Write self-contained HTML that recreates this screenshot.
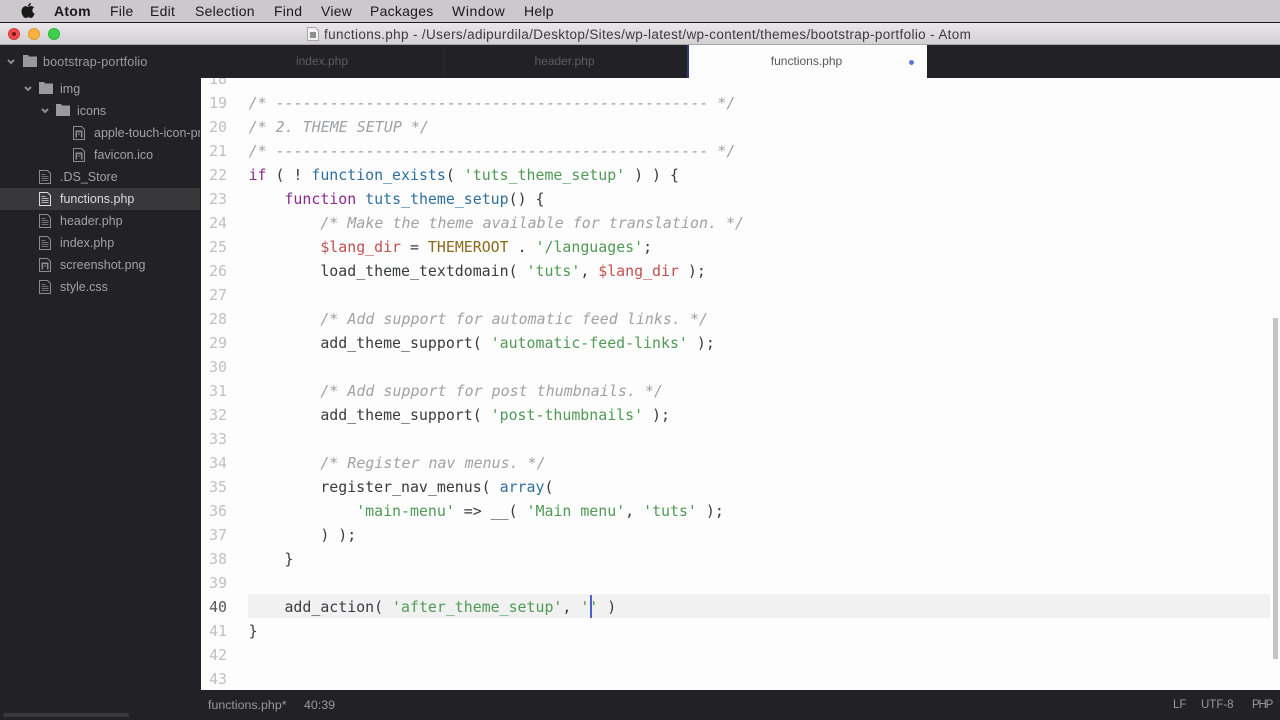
<!DOCTYPE html>
<html><head><meta charset="utf-8"><style>
*{box-sizing:border-box}
html,body{margin:0;padding:0;width:1280px;height:720px;overflow:hidden;background:#222125;font-family:"Liberation Sans",sans-serif}
.abs,.m,.t,.f,.ln,.cl,svg{position:absolute}
#menu{position:absolute;left:0;top:0;width:1280px;height:23px;background:#cbc9cc;border-bottom:1px solid #1c1c1c}
.m{top:3px;font-size:14px;line-height:17px;color:#1a1a1a;white-space:nowrap;letter-spacing:.25px}
#title{position:absolute;left:0;top:23px;width:1280px;height:22px;background:linear-gradient(#e9e7ea,#d2d0d3);border-bottom:1px solid #a9a8aa}
.dot{position:absolute;top:5px;width:12px;height:12px;border-radius:50%}
#tt{position:absolute;left:324px;top:4px;font-size:13.5px;line-height:16px;color:#3c3c3c;white-space:nowrap;letter-spacing:.35px}
#side{position:absolute;left:0;top:45px;width:201px;height:675px;background:#222125}
#tabs{position:absolute;left:201px;top:45px;width:1079px;height:33px;background:#222125}
.t{top:53px;font-size:12px;line-height:16px;text-align:center;color:#5d5c60}
#ed{position:absolute;left:201px;top:78px;width:1079px;height:612px;background:#fdfdfd;overflow:hidden}
#cur{position:absolute;left:47px;top:516px;width:1022px;height:24px;background:#f1f1f2}
.ln{left:0;width:26px;margin-top:1px;text-align:right;font:14.9px/24px "DejaVu Sans Mono",monospace;color:#c0c0c2}
.cl{left:47.6px;margin-top:1px;font:14.9px/24px "DejaVu Sans Mono",monospace;color:#3a3b40;white-space:pre}
.c{color:#a0a1a6;font-style:italic;letter-spacing:.05px}.k{color:#8a2a8c}.b{color:#2f6f9e}.s{color:#4f9a55}.v{color:#c0504d}.o{color:#8a6a1c}
.f{font-size:12.5px;line-height:16px;color:#a2a1a4;white-space:nowrap}
#sel{position:absolute;left:0;top:188px;width:200px;height:22px;background:#38373a}
#bar{position:absolute;left:201px;top:690px;width:1079px;height:30px;background:#222125}
.st{position:absolute;top:698px;font-size:12px;line-height:14px;color:#98979a;white-space:nowrap}
</style></head><body>
<svg width="0" height="0" style="left:0;top:0"><defs>
<symbol id="doc" viewBox="0 0 12 14"><path fill="none" stroke="currentColor" d="M.5.5h8l3 3v10H.5z"/><path fill="none" stroke="currentColor" stroke-width=".8" d="M2.500 4.500h4M2.500 6.500h7M2.500 8.500h7M2.500 10.500h7"/></symbol>
<symbol id="imgf" viewBox="0 0 12 14"><path fill="none" stroke="currentColor" d="M.5.5h8l3 3v10H.5z"/><path fill="none" stroke="currentColor" stroke-width="1.600" d="M3.300 11.500V5.300h5.400v6.200"/><rect x="5" y="7" width="2" height="2" fill="currentColor" opacity=".5"/></symbol>
</defs></svg>
<div id="menu"></div>
<svg style="left:20px;top:2px" width="16" height="18" viewBox="0 0 16 18"><path fill="#1a1a1a" d="M11 1c0 1.700-1.300 3.200-3 3.200C8 2.500 9.400 1.200 11 1zM8 4.800c.8 0 1.700-.8 3-.8 1.200 0 2.300.6 3 1.600-2.500 1.500-2.100 5 .6 6-.7 1.900-2 4.400-3.500 4.400-1 0-1.500-.7-2.700-.7s-1.700.7-2.700.7C3.700 16 1.500 12.500 1.500 9.500c0-3 1.900-5.400 4.300-5.400 1 0 1.600.7 2.200.7z"/></svg>
<div class="m" style="left:54px;font-weight:bold">Atom</div>
<div class="m" style="left:110px">File</div>
<div class="m" style="left:150px">Edit</div>
<div class="m" style="left:195px">Selection</div>
<div class="m" style="left:274px">Find</div>
<div class="m" style="left:321px">View</div>
<div class="m" style="left:370px">Packages</div>
<div class="m" style="left:452px;letter-spacing:.6px">Window</div>
<div class="m" style="left:524px">Help</div>
<div id="title">
<div class="dot" style="left:8px;background:#ee4b4f;border:1px solid #d23a3e"></div>
<div class="dot" style="left:28px;background:#f9b33f;border:1px solid #e09a2c"></div>
<div class="dot" style="left:48px;background:#3fd04b;border:1px solid #2fb43c"></div>
<div style="position:absolute;left:12px;top:9px;width:4px;height:4px;border-radius:50%;background:#7c1015"></div>
<svg style="left:307px;top:4px" width="12" height="14" viewBox="0 0 12 14"><path fill="#f2f2f2" stroke="#a8a8a8" d="M.5.500h8l3 3v10H.5z"/><rect x="3" y="5" width="6" height="6" fill="#8f8f8f"/></svg>
<div id="tt">functions.php - /Users/adipurdila/Desktop/Sites/wp-latest/wp-content/themes/bootstrap-portfolio - Atom</div>
</div>
<div id="side">
<div id="sel" style="top:143px"></div>
</div>
<svg style="left:6px;top:57px" width="10" height="10" viewBox="0 0 10 10"><path d="M2 3l3 3 3-3" fill="none" stroke="#8d8c8f" stroke-width="2"/></svg>
<svg style="left:23px;top:55px" width="14" height="12" viewBox="0 0 14 12"><path fill="#9a999c" d="M0 0h5l1 1.500h8V12H0z"/></svg>
<div class="f" style="left:43px;top:54px;color:#9c9b9e;letter-spacing:.2px">bootstrap-portfolio</div>
<svg style="left:23px;top:84px" width="10" height="10" viewBox="0 0 10 10"><path d="M2 3l3 3 3-3" fill="none" stroke="#8d8c8f" stroke-width="2"/></svg>
<svg style="left:39px;top:82px" width="14" height="12" viewBox="0 0 14 12"><path fill="#9a999c" d="M0 0h5l1 1.500h8V12H0z"/></svg>
<div class="f" style="left:60px;top:81px">img</div>
<svg style="left:40px;top:106px" width="10" height="10" viewBox="0 0 10 10"><path d="M2 3l3 3 3-3" fill="none" stroke="#8d8c8f" stroke-width="2"/></svg>
<svg style="left:56px;top:104px" width="14" height="12" viewBox="0 0 14 12"><path fill="#9a999c" d="M0 0h5l1 1.500h8V12H0z"/></svg>
<div class="f" style="left:77px;top:103px">icons</div>
<svg style="left:73px;top:126px;color:#8d8c8f" width="12" height="14"><use href="#imgf"/></svg>
<div class="f" style="left:94px;top:125px;width:106px;overflow:hidden">apple-touch-icon-precomposed.png</div>
<svg style="left:73px;top:148px;color:#8d8c8f" width="12" height="14"><use href="#imgf"/></svg>
<div class="f" style="left:94px;top:147px">favicon.ico</div>
<svg style="left:39px;top:170px;color:#8d8c8f" width="12" height="14"><use href="#doc"/></svg>
<div class="f" style="left:60px;top:169px">.DS_Store</div>
<svg style="left:39px;top:192px;color:#dcdcdc" width="12" height="14"><use href="#doc"/></svg>
<div class="f" style="left:60px;top:191px;color:#dcdcde">functions.php</div>
<svg style="left:39px;top:214px;color:#8d8c8f" width="12" height="14"><use href="#doc"/></svg>
<div class="f" style="left:60px;top:213px">header.php</div>
<svg style="left:39px;top:236px;color:#8d8c8f" width="12" height="14"><use href="#doc"/></svg>
<div class="f" style="left:60px;top:235px">index.php</div>
<svg style="left:39px;top:258px;color:#8d8c8f" width="12" height="14"><use href="#imgf"/></svg>
<div class="f" style="left:60px;top:257px">screenshot.png</div>
<svg style="left:39px;top:280px;color:#8d8c8f" width="12" height="14"><use href="#doc"/></svg>
<div class="f" style="left:60px;top:279px">style.css</div>
<div style="position:absolute;left:3px;top:713px;width:126px;height:4px;border-radius:2px;background:#39383b"></div>
<div id="tabs"></div>
<div style="position:absolute;left:443px;top:45px;width:1px;height:33px;background:#2b2a2d"></div>
<div style="position:absolute;left:687px;top:45px;width:2px;height:33px;background:#2c3f7a"></div>
<div style="position:absolute;left:689px;top:45px;width:238px;height:33px;background:#fdfdfd"></div>
<div class="t" style="left:201px;width:242px">index.php</div>
<div class="t" style="left:444px;width:241px">header.php</div>
<div class="t" style="left:689px;width:235px;color:#58575b">functions.php</div>
<div style="position:absolute;left:909px;top:60px;width:5px;height:5px;border-radius:50%;background:#5a7fd0"></div>
<div id="ed">
<div id="cur"></div>
<div class="ln" style="top:-12px">18</div>
<div class="ln" style="top:12px">19</div><div class="cl" style="top:12px"><span class="c">/* ------------------------------------------------ */</span></div>
<div class="ln" style="top:36px">20</div><div class="cl" style="top:36px"><span class="c">/* 2. THEME SETUP */</span></div>
<div class="ln" style="top:60px">21</div><div class="cl" style="top:60px"><span class="c">/* ------------------------------------------------ */</span></div>
<div class="ln" style="top:84px">22</div><div class="cl" style="top:84px"><span class="k">if</span> ( ! <span class="b">function_exists</span>( <span class="s">'tuts_theme_setup'</span> ) ) {</div>
<div class="ln" style="top:108px">23</div><div class="cl" style="top:108px">    <span class="k">function</span> <span class="b">tuts_theme_setup</span>() {</div>
<div class="ln" style="top:132px">24</div><div class="cl" style="top:132px">        <span class="c">/* Make the theme available for translation. */</span></div>
<div class="ln" style="top:156px">25</div><div class="cl" style="top:156px">        <span class="v">$lang_dir</span> = <span class="o">THEMEROOT</span> . <span class="s">'/languages'</span>;</div>
<div class="ln" style="top:180px">26</div><div class="cl" style="top:180px">        load_theme_textdomain( <span class="s">'tuts'</span>, <span class="v">$lang_dir</span> );</div>
<div class="ln" style="top:204px">27</div>
<div class="ln" style="top:228px">28</div><div class="cl" style="top:228px">        <span class="c">/* Add support for automatic feed links. */</span></div>
<div class="ln" style="top:252px">29</div><div class="cl" style="top:252px">        add_theme_support( <span class="s">'automatic-feed-links'</span> );</div>
<div class="ln" style="top:276px">30</div>
<div class="ln" style="top:300px">31</div><div class="cl" style="top:300px">        <span class="c">/* Add support for post thumbnails. */</span></div>
<div class="ln" style="top:324px">32</div><div class="cl" style="top:324px">        add_theme_support( <span class="s">'post-thumbnails'</span> );</div>
<div class="ln" style="top:348px">33</div>
<div class="ln" style="top:372px">34</div><div class="cl" style="top:372px">        <span class="c">/* Register nav menus. */</span></div>
<div class="ln" style="top:396px">35</div><div class="cl" style="top:396px">        register_nav_menus( <span class="b">array</span>(</div>
<div class="ln" style="top:420px">36</div><div class="cl" style="top:420px">            <span class="s">'main-menu'</span> =&gt; __( <span class="s">'Main menu'</span>, <span class="s">'tuts'</span> );</div>
<div class="ln" style="top:444px">37</div><div class="cl" style="top:444px">        ) );</div>
<div class="ln" style="top:468px">38</div><div class="cl" style="top:468px">    }</div>
<div class="ln" style="top:492px">39</div>
<div class="ln" style="top:516px;color:#55555a">40</div><div class="cl" style="top:516px">    add_action( <span class="s">'after_theme_setup'</span>, <span class="s">''</span> )</div>
<div style="position:absolute;left:389px;top:517px;width:2px;height:23px;background:#4a63d0"></div>
<div class="ln" style="top:540px">41</div><div class="cl" style="top:540px">}</div>
<div class="ln" style="top:564px">42</div>
<div class="ln" style="top:588px">43</div>
<div style="position:absolute;left:1072px;top:240px;width:5px;height:341px;background:#c4c4c6"></div>
</div>
<div id="bar"></div>
<div class="st" style="left:208px;font-size:12.4px">functions.php*</div>
<div class="st" style="left:304px;font-size:12.4px">40:39</div>
<div class="st" style="left:1173px;font-size:11.5px">LF</div>
<div class="st" style="left:1201px;font-size:11.5px">UTF-8</div>
<div class="st" style="left:1252px;font-size:11.5px;letter-spacing:-1.2px">PHP</div>
</body></html>
